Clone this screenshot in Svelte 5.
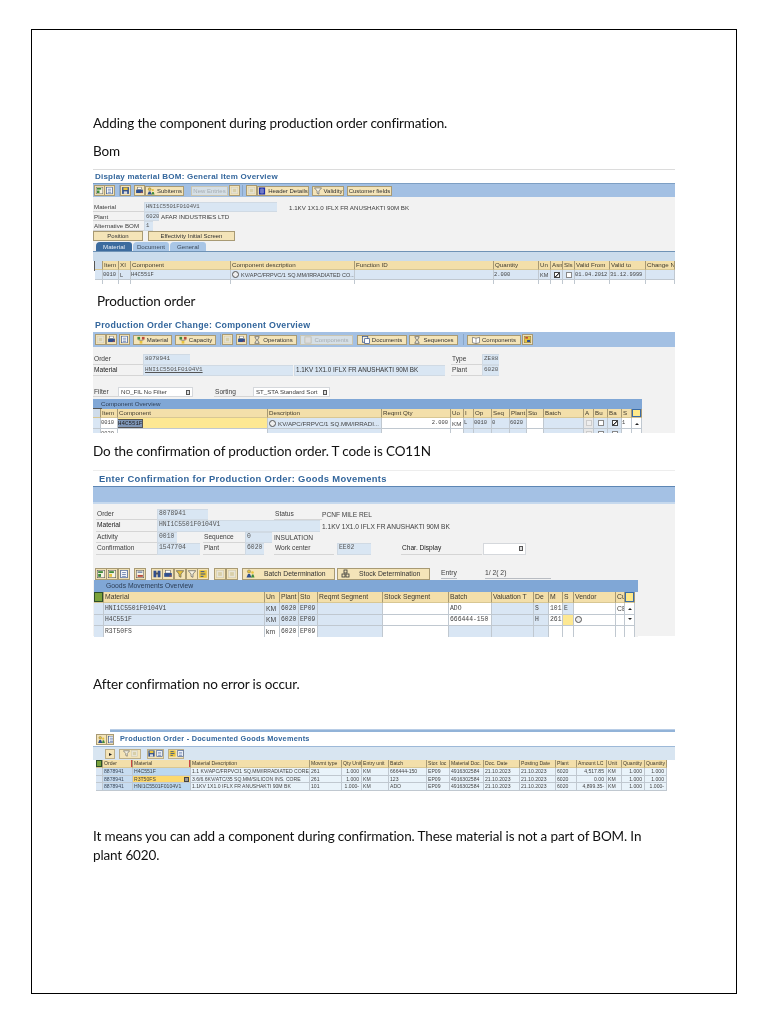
<script>
  const tb1 = [
    { i: 'grid', ml: 2 }, { i: 'doc', ml: 1 }, { sep: 1, ml: 5 }, { i: 'save', ml: 1 }, { i: 'print', ml: 5 },
    { b: 'Subitems', ic: 'people', w: 39, ml: 1 }, { b: 'New Entries', w: 37, ml: 7, off: 1 }, { i: 'off', ml: 2 },
    { sep: 1, ml: 3 }, { i: 'off', ml: 4 }, { b: 'Header Details', ic: 'blue', w: 52, ml: 1 },
    { b: 'Validity', ic: 'filter', w: 32, ml: 3 }, { b: 'Customer fields', w: 45, ml: 3 }
  ];
  const cols1 = [
    ['', 8, 'sel'], ['Item', 16], ['XI', 12], ['Component', 100], ['Component description', 124], ['Function ID', 139],
    ['Quantity', 45], ['Un', 12], ['Asm', 12], ['Sls', 12], ['Valid From', 35], ['Valid to', 36], ['Change No', 29]
  ];
  const rows1 = [
    [{ t: '' }, { t: '0010', m: 1 }, { t: 'L' }, { t: 'H4C551F', m: 1 }, { t: 'KV/APC/FRPVC/1 SQ.MM/IRRADIATED CO...', help: 1 }, { t: '' },
     { t: '2.000', m: 1 }, { t: 'KM' }, { chk: 1 }, { chk: 0 }, { t: '01.04.2012', m: 1 }, { t: '31.12.9999', m: 1 }, { t: '' }],
    cols1.map(() => ({ t: '', w: 1 }))
  ];

  const tb2 = [
    { i: 'off', ml: 3 }, { i: 'print', ml: 2 }, { i: 'doc', ml: 4 }, { b: 'Material', ic: 'tree', w: 39, ml: 4 }, { b: 'Capacity', ic: 'tree', w: 41, ml: 3 },
    { sep: 1, ml: 4 }, { i: 'off', ml: 2 }, { i: 'print', ml: 5 }, { b: 'Operations', ic: 'sand', w: 48, ml: 3 },
    { b: 'Components', ic: 'cube', w: 53, ml: 3, off: 1 }, { b: 'Documents', ic: 'docs', w: 50, ml: 4 },
    { b: 'Sequences', ic: 'sand', w: 49, ml: 2 }, { sep: 1, ml: 5 }, { b: 'Components', ic: 'book', w: 54, ml: 3 }, { i: 'flag', ml: 2 }
  ];
  const cols2 = [
    ['', 8, 'sel'], ['Item', 17], ['Component', 150], ['Description', 114], ['Reqmt Qty', 69], ['Uo', 13], ['I', 10], ['Op', 18], ['Seq', 18],
    ['Plant', 17], ['Sto', 17], ['Batch', 40], ['A', 10], ['Bu', 14], ['Ba', 14], ['S', 10], ['', 10, 'set']
  ];
  const rows2 = [
    [{ t: '' }, { t: '0010', m: 1, w: 1 }, { t: 'H4C551F', m: 1, y: 1, focus: 1 }, { t: 'KV/APC/FRPVC/1 SQ.MM/IRRADI...', help: 1 }, { t: '2.000', m: 1, w: 1, r: 1 },
     { t: 'KM', w: 1 }, { t: 'L', m: 1 }, { t: '0010', m: 1 }, { t: '0', m: 1 }, { t: '6020', m: 1 }, { t: '', w: 1 }, { t: '' },
     { chk: 0, g: 1 }, { chk: 0 }, { chk: 1 }, { t: '1', m: 1, w: 1 }, { arrow: 'up', w: 1 }],
    [{ t: '' }, { t: '0020', m: 1, w: 1 }, { t: '', w: 1 }, { t: '' }, { t: '', w: 1 }, { t: '', w: 1 }, { t: '' }, { t: '' }, { t: '' }, { t: '' }, { t: '', w: 1 }, { t: '' },
     { chk: 0, g: 1 }, { chk: 0 }, { chk: 0 }, { t: '', w: 1 }, { arrow: 'dn', w: 1 }]
  ];

  const tb3 = [
    { i: 'grid', ml: 3 }, { i: 'grid2', ml: 1 }, { i: 'doc', ml: 2 }, { i: 'flag2', ml: 6 }, { i: 'bino', ml: 7 }, { i: 'print', ml: 1 },
    { i: 'down', ml: 2 }, { i: 'filter', ml: 2 }, { i: 'sigma', ml: 1 }, { i: 'off', ml: 7 }, { i: 'off', ml: 2 },
    { b: 'Batch Determination', ic: 'people', w: 93, ml: 5, h: 1 }, { b: 'Stock Determination', ic: 'stack', w: 93, ml: 2, h: 1 }
  ];
  const cols3 = [
    ['', 10, 'set3'], ['Material', 161], ['Un', 15], ['Plant', 19], ['Sto', 19], ['Reqmt Segment', 65], ['Stock Segment', 66], ['Batch', 43], ['Valuation T', 42],
    ['De', 15], ['M', 14], ['S', 11], ['Vendor', 42], ['Cu', 9], ['', 10, 'set']
  ];
  const rows3 = [
    [{ t: '' }, { t: 'HNI1C5501F0104V1', m: 1 }, { t: 'KM' }, { t: '6020', m: 1 }, { t: 'EP09', m: 1 }, { t: '' }, { t: '', w: 1 }, { t: 'ADO', m: 1, w: 1 }, { t: '' }, { t: 'S', m: 1 }, { t: '101', m: 1, w: 1 }, { t: 'E', m: 1 }, { t: '', w: 1 }, { t: 'CE', w: 1 }, { arrow: 'up', w: 1 }],
    [{ t: '' }, { t: 'H4C551F', m: 1 }, { t: 'KM' }, { t: '6020', m: 1 }, { t: 'EP09', m: 1 }, { t: '' }, { t: '', w: 1 }, { t: '666444-150', m: 1, w: 1 }, { t: '' }, { t: 'H', m: 1 }, { t: '261', m: 1, w: 1 }, { t: '', y: 1 }, { t: '', w: 1, help: 1 }, { t: '', w: 1 }, { arrow: 'dn', w: 1 }],
    [{ t: '' }, { t: 'R3T50FS', m: 1, w: 1 }, { t: 'km', w: 1 }, { t: '6020', m: 1, w: 1 }, { t: 'EP09', m: 1, w: 1 }, { t: '' }, { t: '', w: 1 }, { t: '' }, { t: '' }, { t: '' }, { t: '', w: 1 }, { t: '', w: 1 }, { t: '', w: 1 }, { t: '', w: 1 }, { t: '', w: 1 }]
  ];

  const cols4 = [
    ['', 7, 'set3'], ['Order', 30, 'mark'], ['Material', 58, 'mark'], ['Material Description', 119], ['Movmt type', 32], ['Qty Unit', 20], ['Entry unit', 27], ['Batch', 38], ['Stor. loc', 23],
    ['Material Doc.', 34], ['Doc. Date', 36], ['Posting Date', 36], ['Plant', 21], ['Amount LC', 30], ['Unit', 15], ['Quantity', 23], ['Quantity', 22]
  ];
  const mk4 = (mat, desc, mv, q, ent, batch, amt, q2) => [
    { t: '' }, { t: '8878941', b: 1 }, { t: mat, d: 1, ...(mat === 'R3T50FS' ? { y: 1, f4: 1 } : {}) }, { t: desc, l: 1 }, { t: mv, l: 1 }, { t: q, l: 1, r: 1 }, { t: ent, l: 1 }, { t: batch, l: 1 }, { t: 'EP09', l: 1 },
    { t: '4916302584', l: 1 }, { t: '21.10.2023', l: 1 }, { t: '21.10.2023', l: 1 }, { t: '6020', l: 1 }, { t: amt, l: 1, r: 1 }, { t: 'KM', l: 1 }, { t: '1.000', l: 1, r: 1 }, { t: q2, l: 1, r: 1 }
  ];
  const rows4 = [
    mk4('H4C551F', '1.1 KV/APC/FRPVC/1 SQ.MM/IRRADIATED CORE', '261', '1.000', 'KM', '666444-150', '4,517.85', '1.000'),
    mk4('R3T50FS', '3.6/6.6KV/ATC/35 SQ.MM/SILICON INS. CORE', '261', '1.000', 'KM', '123', '0.00', '1.000'),
    mk4('HNI1C5501F0104V1', '1.1KV 1X1.0 IFLX FR ANUSHAKTI 90M BK', '101', '1.000-', 'KM', 'ADO', '4,899.35-', '1.000-')
  ];

  const cfg = (a) => a.map((c) => c[1] + 'px').join(' ');
  const col = {
    a: '#3f8a3a', b: '#e8c33c', c: '#2f4f8f', d: '#b94a3a', e: '#555', f: '#f7f3e2', g: '#1f2fa8', h: '#e8e4d6'
  };
</script>

{#snippet icon(kind)}
  <svg class="ico" viewBox="0 0 9 9" aria-hidden="true">
    {#if kind === 'grid' || kind === 'grid2'}
      <rect x=".5" y=".5" width="8" height="8" fill={col.f} stroke={col.e} stroke-width=".7" />
      <rect x="1.5" y="1.5" width="5" height="2" fill={col.a} /><rect x="1.5" y="4.5" width="3" height="3" fill={kind === 'grid' ? col.a : col.b} />
    {:else if kind === 'doc'}
      <rect x="1" y=".5" width="7" height="8" fill="#fff" stroke={col.c} stroke-width=".8" /><path d="M2.5 3h4M2.5 5h4M2.5 7h4" stroke={col.c} stroke-width=".7" />
    {:else if kind === 'save'}
      <rect x=".5" y=".5" width="8" height="8" fill={col.c} /><rect x="2" y="1" width="5" height="3" fill={col.b} /><rect x="2.5" y="5.5" width="4" height="3" fill="#ddd" />
    {:else if kind === 'print'}
      <rect x="2" y=".5" width="5" height="3" fill="#fff" stroke={col.e} stroke-width=".6" /><rect x=".5" y="3.5" width="8" height="4" fill={col.c} /><rect x="6" y="6" width="2" height="1.2" fill={col.d} />
    {:else if kind === 'people'}
      <circle cx="3" cy="2.5" r="1.6" fill={col.b} stroke={col.e} stroke-width=".4" /><path d="M.5 8.5 2 5h2l1.5 3.5z" fill={col.c} /><circle cx="6.5" cy="3.5" r="1.3" fill={col.b} /><path d="M5 8.5 6 5.5h1.5l1 3z" fill={col.a} />
    {:else if kind === 'blue'}
      <rect x="1" y=".5" width="7" height="8" fill={col.g} /><rect x="3" y="2" width="3" height="5" fill="#fff" /><rect x="3.8" y="2" width="1.4" height="5" fill={col.g} />
    {:else if kind === 'filter' || kind === 'down'}
      <path d="M.5 1h8L5.5 4.5V8L3.5 7V4.5z" fill={kind === 'filter' ? col.f : col.b} stroke={col.e} stroke-width=".7" />
    {:else if kind === 'tree'}
      <rect x=".5" y="1" width="3" height="3" fill={col.a} /><rect x="5.5" y="1" width="3" height="3" fill={col.d} /><rect x="3" y="5.5" width="3" height="3" fill={col.b} /><path d="M2 4v.8h5V4M4.5 4.8v.8" stroke={col.e} stroke-width=".5" fill="none" />
    {:else if kind === 'sand'}
      <path d="M2 .8h5L5 4.5 7 8.2H2L4 4.5z" fill={col.f} stroke={col.e} stroke-width=".8" />
    {:else if kind === 'cube'}
      <rect x="1" y="1" width="7" height="7" fill="#ddd" stroke="#b9b4a0" stroke-width=".7" />
    {:else if kind === 'docs'}
      <rect x=".5" y=".5" width="6" height="6.5" fill={col.f} stroke={col.c} stroke-width=".8" /><rect x="3" y="3" width="5.5" height="5.5" fill="#fff" stroke={col.c} stroke-width=".8" />
    {:else if kind === 'book'}
      <path d="M.5 1.5 4.5 2.5 8.5 1.5v6l-4 1-4-1z" fill="#fff" stroke={col.e} stroke-width=".7" /><path d="M4.5 2.5v6" stroke={col.e} stroke-width=".6" />
    {:else if kind === 'flag'}
      <rect x=".5" y=".5" width="8" height="8" fill={col.b} stroke={col.e} stroke-width=".5" /><rect x="2" y="1.5" width="3" height="2" fill={col.d} /><rect x="4" y="5" width="3.5" height="2.5" fill={col.c} />
    {:else if kind === 'flag2'}
      <rect x=".5" y=".5" width="8" height="8" fill={col.f} stroke={col.e} stroke-width=".7" /><rect x="2" y="5.5" width="5.5" height="2" fill={col.d} /><path d="M2 2.5h5" stroke={col.c} />
    {:else if kind === 'bino'}
      <rect x=".8" y="1" width="3" height="7" fill={col.c} /><rect x="5.2" y="1" width="3" height="7" fill={col.c} /><rect x="3" y="3" width="3" height="2" fill={col.e} />
    {:else if kind === 'sigma'}
      <rect x=".5" y=".5" width="8" height="8" fill={col.b} /><path d="M2 2h4M2 4.5h5M2 7h3" stroke={col.c} stroke-width="1" />
    {:else if kind === 'stack'}
      <rect x="3" y="1" width="3" height="3" fill="none" stroke="#333" stroke-width=".8" /><rect x="1" y="5" width="3" height="3" fill="none" stroke="#333" stroke-width=".8" /><rect x="5" y="5" width="3" height="3" fill="none" stroke="#333" stroke-width=".8" />
    {:else}
      <rect x=".5" y=".5" width="8" height="8" fill={col.h} stroke="#cfc8ac" stroke-width=".7" /><rect x="2.5" y="2.5" width="4" height="4" fill="#d8cfa8" />
    {/if}
  </svg>
{/snippet}

{#snippet toolbar(items)}
  {#each items as it}
    {#if it.b}
      <span class="btn" class:off={it.off} class:tall={it.h} style="width:{it.w}px;margin-left:{it.ml}px">
        {#if it.ic}{@render icon(it.ic)}{/if}<span class="blabel">{it.b}</span>
      </span>
    {:else if it.sep}
      <span class="sep" style="margin-left:{it.ml}px"></span>
    {:else}
      <span class="tic" style="margin-left:{it.ml}px">{@render icon(it.i)}</span>
    {/if}
  {/each}
{/snippet}

{#snippet grid(cols, rows, rowClass)}
  <div class="thead" style="grid-template-columns:{cfg(cols)}">
    {#each cols as c}
      <span class="th {c[2] || ''}">{c[0]}</span>
    {/each}
  </div>
  {#each rows as row}
    <div class="trow {rowClass}" style="grid-template-columns:{cfg(cols)}">
      {#each row as c}
        <span class="td" class:mono={c.m} class:white={c.w} class:yel={c.y} class:right={c.r} class:gray={c.g} class:ord={c.b} class:mat={c.d} class:lite={c.l}>
          {#if c.help}<i class="help"></i>{/if}
          {#if c.focus}<mark class="sel">{c.t}</mark>{:else if c.chk !== undefined}<i class="chk" class:on={c.chk} class:dim={c.g}></i>{:else if c.arrow}<i class="arr {c.arrow}"></i>{:else}{c.t}{/if}
          {#if c.f4}<i class="f4"></i>{/if}
        </span>
      {/each}
    </div>
  {/each}
{/snippet}

<div class="frame">
  <p>Adding the component during production order confirmation.</p>
  <p class="m9">Bom</p>

  <section class="shot s1">
    <h2>Display material BOM: General Item Overview</h2>
    <div class="tb">{@render toolbar(tb1)}</div>
    <div class="form f1">
      <div class="r h10"><span class="lb w51">Material</span><span class="fd w133">HNI1C5501F0104V1</span><span class="tx ml12">1.1KV 1X1.0 IFLX FR ANUSHAKTI 90M BK</span></div>
      <div class="r h9"><span class="lb w51">Plant</span><span class="fd w15">6020</span><span class="tx ml2">AFAR INDUSTRIES LTD</span></div>
      <div class="r h10"><span class="lb w51">Alternative BOM</span><span class="fd w9">1</span></div>
      <div class="r h10"><span class="btn wide50">Position</span><span class="btn wide87">Effectivity Initial Screen</span></div>
      <div class="tabs"><span class="tab act">Material</span><span class="tab">Document</span><span class="tab">General</span></div>
    </div>
    <div class="tbar lite-bar"></div>
    <div class="tbl pad3">{@render grid(cols1, rows1, 'rh10')}</div>
  </section>

  <p class="ind m8">Production order</p>

  <section class="shot s2">
    <h2>Production Order Change: Component Overview</h2>
    <div class="tb t15">{@render toolbar(tb2)}</div>
    <div class="form f2">
      <div class="r h11"><span class="lb w50">Order</span><span class="fd w47">8078941</span><span class="lb w31 ml261">Type</span><span class="fd w17">ZE88</span></div>
      <div class="r h11"><span class="lb w50 ln">Material</span><span class="fd w150 und">HNI1C5501F0104V1</span><span class="fd w151 ml1">1.1KV 1X1.0 IFLX FR ANUSHAKTI 90M BK</span><span class="lb w31 ml6">Plant</span><span class="fd w17">6020</span></div>
      <div class="r h10 mt11"><span class="lb w25">Filter</span><span class="box w75">NO_FIL No Filter<i class="dd"></i></span><span class="lb w39 ml21">Sorting</span><span class="box w77">ST_STA Standard Sort<i class="dd"></i></span></div>
      <div class="tbox">
        <div class="ttl">Component Overview</div>
        {@render grid(cols2, rows2, 'rh11')}
      </div>
    </div>
  </section>

  <p class="do m9">Do the confirmation of production order. T code is CO11N</p>

  <section class="shot s3">
    <h2 class="x6">Enter Confirmation for Production Order: Goods Movements</h2>
    <div class="blue"></div>
    <div class="form f3">
      <div class="r h11"><span class="lb w61">Order</span><span class="fd w51 mono">8078941</span><span class="lb w48 ml66">Status</span><span class="tx">PCNF MILE REL</span></div>
      <div class="r h12"><span class="lb w61 ln">Material</span><span class="fd w163 mono">HNI1C5501F0104V1</span><span class="tx ml2">1.1KV 1X1.0 IFLX FR ANUSHAKTI 90M BK</span></div>
      <div class="r h11"><span class="lb w61">Activity</span><span class="fd w20 mono">0010</span><span class="lb w42 ml26">Sequence</span><span class="fd w27 mono">0</span><span class="tx ml2">INSULATION</span></div>
      <div class="r h12"><span class="lb w61">Confirmation</span><span class="fd w43 mono">1547704</span><span class="lb w42 ml3">Plant</span><span class="fd w19 mono">6020</span><span class="lb w60 ml10">Work center</span><span class="fd w34 mono ml3">EE02</span><span class="lb w81 ml30 ln">Char. Display</span><span class="box w43 ml1"><i class="dd"></i></span></div>
      <div class="tools">{@render toolbar(tb3)}<span class="entry">Entry</span><span class="entry n">1/ 2( 2)</span></div>
      <div class="tbox t3">
        <div class="ttl big">Goods Movements Overview</div>
        {@render grid(cols3, rows3, 'rh115')}
      </div>
    </div>
  </section>

  <p class="m38">After confirmation no error is occur.</p>

  <section class="shot s4">
    <div class="topbar"></div>
    <div class="head4"><span class="tic">{@render icon('people')}</span><span class="tic narrow">{@render icon('doc')}</span><h2>Production Order - Documented Goods Movements</h2></div>
    <div class="tb4">
      <span class="tbtn">▸</span><span class="tbtn w22">{@render icon('filter')}{@render icon('off')}</span><span class="tbtn w17">{@render icon('save')}{@render icon('doc')}</span><span class="tbtn w16">{@render icon('sigma')}{@render icon('doc')}</span>
    </div>
    <div class="tbl4">{@render grid(cols4, rows4, 'rh75')}</div>
  </section>

  <p class="m36">It means you can add a component during confirmation. These material is not a part of BOM. In<br />plant 6020.</p>
</div>

<style>
  :global(body) { margin: 0; background: #fff; }
  .frame {
    box-sizing: border-box; width: 706px; height: 965px; margin: 29px 0 0 31px;
    border: 1px solid #000; padding: 84px 0 0 61px; position: relative;
    font-family: "Lato", "Liberation Sans", sans-serif; color: #111;
  }
  p { margin: 0; font-size: 13.5px; line-height: 19px; letter-spacing: -.01em; filter: blur(.2px); }
  .m9 { margin-top: 9px; } .m8 { margin-top: 8px; } .ind { padding-left: 4px; }
  .do { margin-top: 9px; } .m38 { margin-top: 38px; } .m36 { margin-top: 36px; }

  .shot { width: 582px; overflow: hidden; filter: blur(.35px); font-family: "Liberation Sans", sans-serif; font-size: 6.2px; color: #3c3c3c; }
  .s1 { height: 115px; margin-top: 8px; border-top: 1px solid #dcdcdc; box-sizing: border-box; }
  .s2 { height: 116px; margin-top: 6px; }
  .s3 { height: 167px; margin-top: 9px; border-top: 1px solid #ededed; box-sizing: border-box; }
  .s4 { height: 62px; margin-top: 35px; }

  h2 { margin: 0; font-size: 8px; line-height: 14px; height: 13px; padding-left: 2px; color: #33669c; letter-spacing: .22px; font-weight: 700; }
  .s2 h2 { height: 15px; line-height: 16px; font-size: 8.8px; letter-spacing: .28px; }
  .s3 h2.x6 { height: 15px; padding-left: 6px; font-size: 9.4px; line-height: 16px; letter-spacing: .32px; }

  .tb { display: flex; align-items: center; height: 14px; background: #a3c0e3; border-top: 1px solid #7d9fc4; box-sizing: border-box; }
  .tb.t15 { height: 15px; border-top: 0; }
  .form { background: #f2f2f2; box-sizing: border-box; }
  .f1 { height: 54px; padding-top: 5px; }
  .f2 { height: 86px; padding-top: 7px; }
  .f3 { height: 132px; padding-top: 5px; }
  .blue { height: 18px; box-sizing: border-box; border-top: 1px solid #5d86b4; border-bottom: 2px solid #c6d9ee; background: #a4c1e4; }

  .r { display: flex; align-items: center; white-space: nowrap; }
  .h9 { height: 9px; } .h10 { height: 10px; } .h11 { height: 11px; } .h12 { height: 12px; }
  .mt11 { margin-top: 11px; }
  .f3 .r { padding-left: 3px; }
  .f3 .r, .f2 .r { font-size: 6.6px; }
  .lb { display: block; box-sizing: border-box; border-bottom: 1px solid #d5d5d5; line-height: 9px; height: 100%; overflow: hidden; padding-left: 1px; }
  .lb.ln { color: #222; }
  .fd { display: block; box-sizing: border-box; background: #d9e6f3; border: 1px solid #d0dae4; border-width: 1px 0 1px 1px; height: 100%; line-height: 8px; padding-left: 1px; overflow: hidden; color: #555; font-family: "Liberation Mono", monospace; font-size: 5.6px; }
  .f2 .fd { font-size: 6px; }
  .f3 .fd { font-size: 6.4px; }
  .fd.und { text-decoration: underline; }
  .f2 .fd.w151 { font-family: "Liberation Sans", sans-serif; font-size: 6.3px; color: #333; }
  .tx { display: block; white-space: nowrap; }
  .box { position: relative; display: block; box-sizing: border-box; height: 100%; background: #fff; border: 1px solid #d5d8dc; line-height: 8px; padding-left: 2px; overflow: hidden; font-size: 6.1px; }
  .dd { position: absolute; right: 2px; top: 2px; width: 4px; height: 5px; border: 1px solid #555; background: #ddd; box-sizing: border-box; }
  .w9 { width: 9px; } .w15 { width: 15px; } .w17 { width: 17px; } .w19 { width: 19px; } .w20 { width: 20px; } .w25 { width: 25px; }
  .w27 { width: 27px; } .w31 { width: 31px; } .w34 { width: 34px; } .w39 { width: 39px; } .w42 { width: 42px; } .w43 { width: 43px; } .w47 { width: 47px; }
  .w48 { width: 48px; } .w50 { width: 50px; } .w51 { width: 51px; } .w60 { width: 60px; } .w61 { width: 61px; } .w75 { width: 75px; } .w77 { width: 77px; } .w81 { width: 81px; }
  .w133 { width: 133px; } .w150 { width: 150px; } .w151 { width: 151px; } .w163 { width: 163px; }
  .ml1 { margin-left: 1px; } .ml2 { margin-left: 2px; } .ml3 { margin-left: 3px; } .ml6 { margin-left: 6px; } .ml10 { margin-left: 10px; } .ml12 { margin-left: 12px; }
  .ml21 { margin-left: 21px; } .ml26 { margin-left: 26px; } .ml30 { margin-left: 30px; } .ml66 { margin-left: 66px; } .ml261 { margin-left: 261px; }

  .btn { display: flex; align-items: center; justify-content: center; gap: 2px; box-sizing: border-box; height: 10px; background: #f4e4b8; border: 1px solid #a89a74; border-width: 1px 1.5px 1.5px 1px; white-space: nowrap; overflow: hidden; flex: none; color: #333; font-size: 6px; }
  .btn.off { background: #d5dfe6; color: #a7adb2; border-color: #c9c5b2; }
  .btn.tall { height: 12px; font-size: 6.8px; justify-content: flex-start; padding-left: 3px; gap: 9px; }
  .wide50 { width: 50px; }
  .wide87 { width: 87px; margin-left: 5px; }
  .sep { width: 1px; height: 11px; background: #8aa6c6; flex: none; }
  .tic { display: flex; flex: none; background: #f4e4b8; outline: .5px solid #a89a74; outline-offset: -.5px; }
  .tic.narrow { width: 6px; overflow: hidden; }
  .ico { width: 9px; height: 9px; flex: none; display: block; }
  .btn .ico { width: 8px; height: 8px; }
  .tic .ico { transform: scale(.85); }

  .tabs { display: flex; align-items: flex-end; height: 9px; margin-top: 1px; padding-left: 3px; }
  .tab { width: 36px; height: 9px; line-height: 9px; text-align: center; background: #a9c6e6; color: #3b4a5c; margin-right: 1px; border-radius: 4px 3px 0 0; }
  .tab.act { background: #3c6b9e; color: #e8eef5; }

  .tbar { height: 10px; background: #cbdcec; border-top: 1.5px solid #6f93b6; box-sizing: border-box; }
  .tbl { height: 23px; overflow: hidden; background: #fff; }
  .pad3 { padding-left: 2px; }
  .thead, .trow { display: grid; white-space: nowrap; }
  .thead { height: 9px; box-sizing: border-box; }
  .th { display: block; overflow: hidden; box-sizing: border-box; background: #f3dfaa; border-right: 1px solid #a89a74; border-bottom: 1px solid #d8c794; line-height: 8px; padding-left: 1px; color: #3f3a2e; }
  .th.sel { background: #cfdcea; }
  .th.set { background: #ffe98a; box-shadow: inset 0 0 0 1px #3a6ba5; }
  .th.set3 { background: #7aa23a; box-shadow: inset 0 0 0 1px #2d4f2a; }
  .th.mark { box-shadow: inset -2px 1px 0 -1px #c44; }
  .trow { box-sizing: border-box; }
  .rh10 { height: 10px; } .rh11 { height: 11px; } .rh115 { height: 11.5px; } .rh75 { height: 7.5px; }
  .td { display: flex; align-items: center; overflow: hidden; box-sizing: border-box; background: #d9e6f4; border-right: 1px solid #c0c8d0; border-bottom: 1px solid #c0c8d0; padding-left: 1px; color: #444; position: relative; }
  .s1 .td { font-size: 5.5px; }
  .td.mono { font-family: "Liberation Mono", monospace; font-size: 5.4px; padding-left: 0; }
  .td.white { background: #fff; }
  .td.yel { background: #fde893; }
  .td.gray { background: #e8e8e8; }
  .td.right { justify-content: flex-end; padding-right: 2px; }
  .help { width: 7px; height: 7px; border: 1px solid #555; border-radius: 50%; background: #eee; margin-right: 2px; flex: none; box-sizing: border-box; }
  .chk { width: 6px; height: 6px; margin: 0 auto; border: 1px solid #888; background: #fff; box-sizing: border-box; display: block; }
  .chk.on { background: linear-gradient(135deg, #fff 40%, #333 45%, #333 60%, #fff 65%); border-color: #444; }
  .chk.dim { border-color: #ccc; background: #eee; }
  .arr { display: block; margin: 0 auto; width: 0; height: 0; border: 2px solid transparent; }
  .arr.up { border-bottom-color: #222; margin-top: -1px; }
  .arr.dn { border-top-color: #222; margin-top: 1px; }
  .sel { background: #7f97b8; color: #222; font-family: "Liberation Mono", monospace; font-size: 5.8px; outline: 1px solid #555; }

  .tbox { width: 549px; background: #fff; }
  .f2 .tbox { margin-top: 2px; height: 35px; overflow: hidden; }
  .ttl { height: 10px; line-height: 10px; background: #80a7d6; padding-left: 8px; color: #2c3e56; }
  .ttl.big { height: 12px; line-height: 12px; padding-left: 12px; font-size: 6.8px; }
  .t3 { width: 544px; margin-left: 1px; background: #f2f2f2; }
  .t3 .thead { height: 11px; }
  .t3 .th { line-height: 10px; font-size: 6.8px; }
  .t3 .td { font-size: 6.8px; }
  .t3 .td.mono { font-size: 6.4px; padding-left: 1px; }

  .tools { display: flex; align-items: center; height: 13px; margin-top: 12px; }
  .tools .ico { width: 10px; height: 10px; }
  .tools .btn .ico { width: 9px; height: 9px; }
  .entry { margin-left: 11px; font-size: 6.8px; border-bottom: 1px solid #b8bcc2; line-height: 10px; }
  .entry.n { margin-left: 28px; padding-right: 45px; }

  .topbar { height: 2px; margin-left: 17px; background: #92b3d8; border-top: 1px solid #b8cde6; }
  .head4 { display: flex; align-items: center; height: 14px; padding-left: 4px; gap: 1px; background: #fff; }
  .head4 h2 { font-size: 7.3px; margin-left: 6px; height: 14px; line-height: 14px; letter-spacing: .25px; padding-left: 0; }
  .tb4 { display: flex; align-items: center; height: 14px; padding-left: 12px; gap: 4px; background: #d8e5f1; border-top: 1.5px solid #9db9d8; box-sizing: border-box; }
  .tbtn { display: flex; align-items: center; justify-content: center; height: 10px; min-width: 10px; background: #f4e4b8; border: 1px solid #bcae88; color: #222; font-size: 6px; gap: 1px; box-sizing: border-box; }
  .tbtn .ico { width: 7px; height: 7px; }
  .w22 { width: 22px; } .w17 { width: 17px; } .w16 { width: 16px; }
  .tb4 .w17 { margin-left: 2px; }
  .tbl4 { padding-left: 3px; font-size: 5.1px; }
  .tbl4 .thead { height: 8px; }
  .tbl4 .th { line-height: 7px; }
  .td.ord { background: #c7dcf0; color: #3c4a5c; }
  .td.mat { background: #bcd8f0; }
  .td.lite { background: #e9f3fa; }
  .td.yel.mat { background: #fcd96f; }
  .f4 { position: absolute; right: 1px; top: 1px; width: 5px; height: 5px; background: #999; border: 1px solid #444; box-sizing: border-box; }
</style>
